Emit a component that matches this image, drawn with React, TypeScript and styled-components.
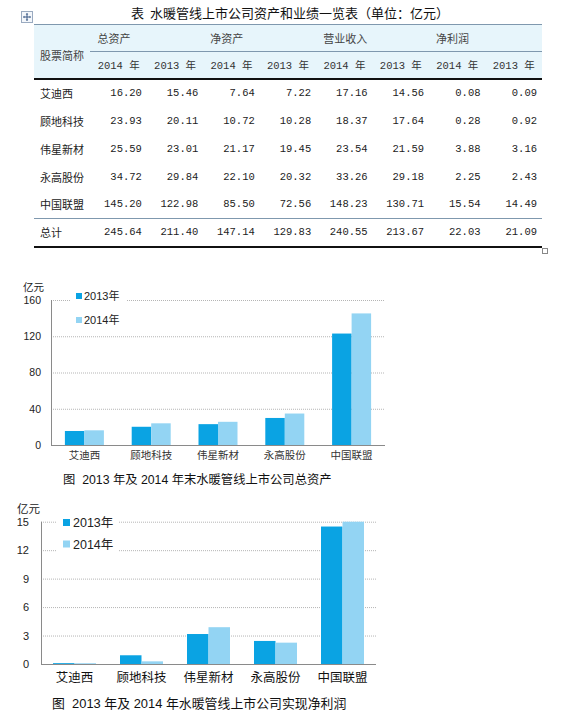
import styled, { createGlobalStyle } from "styled-components";

const companies = ["艾迪西", "顾地科技", "伟星新材", "永高股份", "中国联盟"];

const rows = [
  ["艾迪西", "16.20", "15.46", "7.64", "7.22", "17.16", "14.56", "0.08", "0.09"],
  ["顾地科技", "23.93", "20.11", "10.72", "10.28", "18.37", "17.64", "0.28", "0.92"],
  ["伟星新材", "25.59", "23.01", "21.17", "19.45", "23.54", "21.59", "3.88", "3.16"],
  ["永高股份", "34.72", "29.84", "22.10", "20.32", "33.26", "29.18", "2.25", "2.43"],
  ["中国联盟", "145.20", "122.98", "85.50", "72.56", "148.23", "130.71", "15.54", "14.49"],
];
const total = ["总计", "245.64", "211.40", "147.14", "129.83", "240.55", "213.67", "22.03", "21.09"];

const groups = ["总资产", "净资产", "营业收入", "净利润"];

const DARK = "#0aa3e3";
const LIGHT = "#93d4f3";

type ChartCfg = {
  height: number;
  x0: number;
  x1: number;
  top: number;
  base: number;
  max: number;
  ticks: number[];
  barW: number;
  tickRight: number;
  tickFont: number;
  unit: { x: number; y: number; size: number };
  legend: { box: [number, number, number, number]; x: number; sq: number; ys: number[]; textX: number; font: number };
  labelY: number;
  labelFont: number;
  labelColor: string;
  v2013: number[];
  v2014: number[];
};

const assets: ChartCfg = {
  height: 186,
  x0: 51,
  x1: 385,
  top: 20,
  base: 165,
  max: 160,
  ticks: [0, 40, 80, 120, 160],
  barW: 19.5,
  tickRight: 41,
  tickFont: 10.5,
  unit: { x: 23, y: 7, size: 10.5 },
  legend: { box: [70, 4, 56, 48], x: 76, sq: 6, ys: [16, 40], textX: 84, font: 11 },
  labelY: 175,
  labelFont: 10.5,
  labelColor: "#333",
  v2013: [15.46, 20.11, 23.01, 29.84, 122.98],
  v2014: [16.2, 23.93, 25.59, 34.72, 145.2],
};

const profit: ChartCfg = {
  height: 196,
  x0: 41,
  x1: 376,
  top: 27.7,
  base: 170,
  max: 15,
  ticks: [0, 3, 6, 9, 12, 15],
  barW: 21.5,
  tickRight: 29,
  tickFont: 11,
  unit: { x: 17, y: 14.5, size: 11.5 },
  legend: { box: [56, 14, 62, 50], x: 63, sq: 7, ys: [28.5, 50], textX: 73, font: 12.5 },
  labelY: 183,
  labelFont: 12.5,
  labelColor: "#111",
  v2013: [0.09, 0.92, 3.16, 2.43, 14.49],
  v2014: [0.08, 0.28, 3.88, 2.25, 15.54],
};

const GlobalStyle = createGlobalStyle`
  html, body {
    margin: 0;
    padding: 0;
    background: #fff;
  }
  body {
    font-family: "Noto Sans CJK SC", sans-serif;
    color: #222;
  }
`;

const Page = styled.div`
  width: 566px;
  height: 720px;
  display: flex;
  flex-direction: column;
  overflow: hidden;
`;

const Title = styled.div`
  height: 24px;
  line-height: 26px;
  text-align: center;
  font-size: 13px;
  color: #111;
  padding-left: 14px;
  white-space: pre;
`;

const TableWrap = styled.div`
  position: relative;
  width: 508px;
  margin-left: 34px;
`;

const MoveIcon = styled.svg`
  position: absolute;
  left: -13px;
  top: -13px;
`;

const Handle = styled.div`
  position: absolute;
  right: -6px;
  bottom: -6px;
  width: 4px;
  height: 4px;
  border: 1px solid #888;
  background: #fff;
`;

const Table = styled.table`
  width: 508px;
  border-collapse: collapse;
  table-layout: fixed;
  border-top: 1px solid #7f98ae;
  border-bottom: 2px solid #111;
  font-size: 11px;
  color: #222;

  td,
  th {
    padding: 0;
    font-weight: 400;
  }
`;

const Head = styled.thead`
  background: #e7f5fb;
  border-bottom: 2px solid #111;
`;

const HeadRow = styled.tr`
  height: 27px;
`;

const NameHead = styled.th`
  text-align: left;
  padding-left: 6px !important;
  padding-top: 8px !important;
  color: #444;
`;

const GroupHead = styled.th`
  text-align: left;
  padding-left: 7px !important;
  color: #444;
  border-bottom: 1px solid #7f98ae;
`;

const YearHead = styled.th`
  text-align: center;
  font-family: "Liberation Mono", "Noto Sans CJK SC", monospace;
  font-size: 10.5px;
  color: #333;
`;

const Row = styled.tr<{ $total?: boolean }>`
  height: 28px;
  border-top: ${(p) => (p.$total ? "1px solid #7f98ae" : "none")};
`;

const NameCell = styled.td`
  text-align: left;
  padding-left: 6px !important;
  color: #222;
`;

const NumCell = styled.td`
  text-align: right;
  padding-right: 5px !important;
  font-family: "Liberation Mono", monospace;
  font-size: 10.5px;
  color: #222;
`;

const ChartBox = styled.svg<{ $mt: number }>`
  display: block;
  margin-top: ${(p) => p.$mt}px;
  flex-shrink: 0;
`;

const Caption = styled.div<{ $left: number; $size: number }>`
  height: 28px;
  line-height: 28px;
  padding-left: ${(p) => p.$left}px;
  font-size: ${(p) => p.$size}px;
  color: #111;
  white-space: pre;
  font-family: "Liberation Sans", "Noto Sans CJK SC", sans-serif;
`;

function BarChart({ cfg, mt }: { cfg: ChartCfg; mt: number }) {
  const plotH = cfg.base - cfg.top;
  const y = (v: number) => cfg.base - (Math.min(v, cfg.max) / cfg.max) * plotH;
  const groupW = (cfg.x1 - cfg.x0) / companies.length;
  const lg = cfg.legend;
  return (
    <ChartBox width={566} height={cfg.height} $mt={mt}>
      {cfg.ticks.map((t) => (
        <g key={t}>
          {t > 0 && (
            <line x1={cfg.x0} x2={cfg.x1} y1={y(t) + 0.5} y2={y(t) + 0.5} stroke="#b5b5b5" strokeDasharray="1 1" />
          )}
          <text
            x={cfg.tickRight}
            y={y(t)}
            dy="0.36em"
            textAnchor="end"
            fontSize={cfg.tickFont}
            fontFamily="Liberation Sans, sans-serif"
            fill="#222"
          >
            {t}
          </text>
        </g>
      ))}
      <text x={cfg.unit.x} y={cfg.unit.y} dy="0.36em" fontSize={cfg.unit.size} fill="#222">
        亿元
      </text>
      <rect x={lg.box[0]} y={lg.box[1]} width={lg.box[2]} height={lg.box[3]} fill="#fff" />
      {["2013年", "2014年"].map((s, i) => (
        <g key={s}>
          <rect x={lg.x} y={lg.ys[i] - lg.sq / 2} width={lg.sq} height={lg.sq} fill={i === 0 ? DARK : LIGHT} />
          <text x={lg.textX} y={lg.ys[i]} dy="0.36em" fontSize={lg.font} fontFamily="Liberation Sans, Noto Sans CJK SC, sans-serif" fill="#222">
            {s}
          </text>
        </g>
      ))}
      {companies.map((c, i) => {
        const cx = cfg.x0 + groupW * (i + 0.5);
        return (
          <g key={c}>
            <rect x={cx - cfg.barW} y={y(cfg.v2013[i])} width={cfg.barW} height={cfg.base - y(cfg.v2013[i])} fill={DARK} />
            <rect x={cx} y={y(cfg.v2014[i])} width={cfg.barW} height={cfg.base - y(cfg.v2014[i])} fill={LIGHT} />
            <text x={cx} y={cfg.labelY} dy="0.36em" textAnchor="middle" fontSize={cfg.labelFont} fill={cfg.labelColor}>
              {c}
            </text>
          </g>
        );
      })}
      <line x1={cfg.x0 + 0.5} x2={cfg.x0 + 0.5} y1={cfg.top} y2={cfg.base} stroke="#8a8a8a" />
      <line x1={cfg.x0} x2={cfg.x1} y1={cfg.base + 0.5} y2={cfg.base + 0.5} stroke="#8a8a8a" />
    </ChartBox>
  );
}

export default function App() {
  return (
    <Page>
      <GlobalStyle />
      <Title>{"表  水暖管线上市公司资产和业绩一览表（单位：亿元）"}</Title>
      <TableWrap>
        <MoveIcon width="12" height="12" viewBox="0 0 12 12">
          <rect x="0.5" y="0.5" width="11" height="11" fill="#f4f7fb" stroke="#9aaac0" />
          <path d="M6 2.5v7M2.5 6h7" stroke="#3c5a86" strokeWidth="1" />
          <path d="M6 2l-1.3 1.4h2.6zM6 10l-1.3-1.4h2.6zM2 6l1.4-1.3v2.6zM10 6l-1.4-1.3v2.6z" fill="#3c5a86" />
        </MoveIcon>
        <Table>
          <colgroup>
            {Array.from({ length: 9 }).map((_, i) => (
              <col key={i} style={{ width: 508 / 9 }} />
            ))}
          </colgroup>
          <Head>
            <HeadRow>
              <NameHead rowSpan={2}>股票简称</NameHead>
              {groups.map((g) => (
                <GroupHead key={g} colSpan={2}>
                  {g}
                </GroupHead>
              ))}
            </HeadRow>
            <HeadRow>
              {groups.map((g) => [
                <YearHead key={g + "a"}>2014 年</YearHead>,
                <YearHead key={g + "b"}>2013 年</YearHead>,
              ])}
            </HeadRow>
          </Head>
          <tbody>
            {rows.map((r) => (
              <Row key={r[0]}>
                <NameCell>{r[0]}</NameCell>
                {r.slice(1).map((v, i) => (
                  <NumCell key={i}>{v}</NumCell>
                ))}
              </Row>
            ))}
            <Row $total>
              <NameCell>{total[0]}</NameCell>
              {total.slice(1).map((v, i) => (
                <NumCell key={i}>{v}</NumCell>
              ))}
            </Row>
          </tbody>
        </Table>
        <Handle />
      </TableWrap>
      <BarChart cfg={assets} mt={32} />
      <Caption $left={63} $size={12.3}>{"图  2013 年及 2014 年末水暖管线上市公司总资产"}</Caption>
      <BarChart cfg={profit} mt={0} />
      <Caption $left={52} $size={12.9}>{"图  2013 年及 2014 年水暖管线上市公司实现净利润"}</Caption>
    </Page>
  );
}
